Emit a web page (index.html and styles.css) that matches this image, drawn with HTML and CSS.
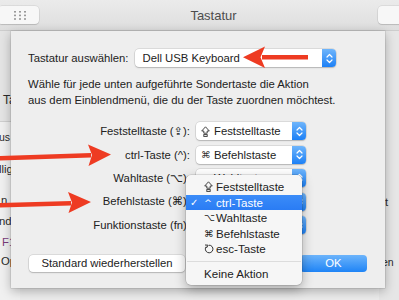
FILE: index.html
```html
<!DOCTYPE html>
<html lang="de">
<head>
<meta charset="utf-8">
<title>Tastatur</title>
<link rel="stylesheet" href="styles.css">
</head>
<body>
<div class="window">
  <header class="titlebar">
    <div class="tb-btn tb-left">
      <svg class="grid" width="12" height="9" viewBox="0 0 12 9">
        <g fill="#9a9a9a">
          <rect x="0" y="0" width="2" height="1.6"/><rect x="5" y="0" width="2" height="1.6"/><rect x="10" y="0" width="2" height="1.6"/>
          <rect x="0" y="3.6" width="2" height="1.6"/><rect x="5" y="3.6" width="2" height="1.6"/><rect x="10" y="3.6" width="2" height="1.6"/>
          <rect x="0" y="7.2" width="2" height="1.6"/><rect x="5" y="7.2" width="2" height="1.6"/><rect x="10" y="7.2" width="2" height="1.6"/>
        </g>
      </svg>
    </div>
    <div class="title">Tastatur</div>
    <div class="tb-btn tb-right"></div>
  </header>

  <main class="content">
    <div class="bg-left">
      <div class="bg-top"><span class="frag f-ta">Ta</span></div>
      <div class="bg-list">
        <span class="frag f-us">us</span>
        <span class="frag f-llig">llig</span>
        <span class="frag f-n">n</span>
        <span class="frag f-nd">nd</span>
        <span class="frag f-f1">F1</span>
        <span class="frag f-op">Op</span>
      </div>
    </div>
    <div class="bg-right">
      <span class="frag r-t">t</span>
      <span class="frag r-en">en</span>
    </div>
  </main>

  <section class="sheet">
    <div class="row-select">
      <span class="lbl">Tastatur auswählen:</span>
      <div class="popup popup-wide">
        <span class="val val-wide">Dell USB Keyboard</span>
        <span class="stepper"><svg width="7" height="11" viewBox="0 0 7 11"><path d="M1 4 L3.5 1.5 L6 4 M1 7 L3.5 9.5 L6 7" fill="none" stroke="#fff" stroke-width="1.2" stroke-linecap="round" stroke-linejoin="round"/></svg></span>
      </div>
    </div>

    <p class="desc">Wähle für jede unten aufgeführte Sondertaste die Aktion<br>aus dem Einblendmenü, die du der Taste zuordnen möchtest.</p>

    <div class="keys">
      <span class="klbl">Feststelltaste (⇪):</span>
      <div class="popup">
        <span class="val"><svg class="ico-caps" width="9" height="11" viewBox="0 0 9 11"><path d="M4.5 0.8 L8.3 5 L6.2 5 L6.2 7.2 L2.8 7.2 L2.8 5 L0.7 5 Z" fill="none" stroke="#333" stroke-width="0.9" stroke-linejoin="round"/><rect x="2.8" y="8.6" width="3.4" height="1.8" fill="none" stroke="#333" stroke-width="0.9"/></svg>Feststelltaste</span>
        <span class="stepper"><svg width="7" height="11" viewBox="0 0 7 11"><path d="M1 4 L3.5 1.5 L6 4 M1 7 L3.5 9.5 L6 7" fill="none" stroke="#fff" stroke-width="1.2" stroke-linecap="round" stroke-linejoin="round"/></svg></span>
      </div>

      <span class="klbl">ctrl-Taste (^):</span>
      <div class="popup">
        <span class="val"><span class="sym">⌘</span>Befehlstaste</span>
        <span class="stepper"><svg width="7" height="11" viewBox="0 0 7 11"><path d="M1 4 L3.5 1.5 L6 4 M1 7 L3.5 9.5 L6 7" fill="none" stroke="#fff" stroke-width="1.2" stroke-linecap="round" stroke-linejoin="round"/></svg></span>
      </div>

      <span class="klbl">Wahltaste (⌥):</span>
      <div class="popup">
        <span class="val"><span class="sym">⌥</span>Wahltaste</span>
        <span class="stepper"><svg width="7" height="11" viewBox="0 0 7 11"><path d="M1 4 L3.5 1.5 L6 4 M1 7 L3.5 9.5 L6 7" fill="none" stroke="#fff" stroke-width="1.2" stroke-linecap="round" stroke-linejoin="round"/></svg></span>
      </div>

      <span class="klbl">Befehlstaste (⌘):</span>
      <div class="popup">
        <span class="val"></span>
        <span class="stepper"><svg width="7" height="11" viewBox="0 0 7 11"><path d="M1 4 L3.5 1.5 L6 4 M1 7 L3.5 9.5 L6 7" fill="none" stroke="#fff" stroke-width="1.2" stroke-linecap="round" stroke-linejoin="round"/></svg></span>
      </div>

      <span class="klbl">Funktionstaste (fn):</span>
      <div class="popup">
        <span class="val"></span>
        <span class="stepper"><svg width="7" height="11" viewBox="0 0 7 11"><path d="M1 4 L3.5 1.5 L6 4 M1 7 L3.5 9.5 L6 7" fill="none" stroke="#fff" stroke-width="1.2" stroke-linecap="round" stroke-linejoin="round"/></svg></span>
      </div>
    </div>

    <div class="actions">
      <button class="btn btn-std">Standard wiederherstellen</button>
      <span class="spacer"></span>
      <button class="btn btn-ok">OK</button>
    </div>

    <div class="menu">
      <div class="mi"><span class="chk"></span><span class="mico"><svg width="9" height="11" viewBox="0 0 9 11"><path d="M4.5 0.8 L8.3 5 L6.2 5 L6.2 7.2 L2.8 7.2 L2.8 5 L0.7 5 Z" fill="none" stroke="#333" stroke-width="0.9" stroke-linejoin="round"/><rect x="2.8" y="8.6" width="3.4" height="1.8" fill="none" stroke="#333" stroke-width="0.9"/></svg></span><span>Feststelltaste</span></div>
      <div class="mi mi-sel"><span class="chk">✓</span><span class="mico">^</span><span>ctrl-Taste</span></div>
      <div class="mi"><span class="chk"></span><span class="mico">⌥</span><span>Wahltaste</span></div>
      <div class="mi"><span class="chk"></span><span class="mico">⌘</span><span>Befehlstaste</span></div>
      <div class="mi"><span class="chk"></span><span class="mico"><svg width="10" height="10" viewBox="0 0 10 10"><path d="M2.2 2.6 A3.8 3.8 0 1 0 5 1.2" fill="none" stroke="#333" stroke-width="1"/><path d="M1 1 L4.2 1.2 L2.4 4" fill="none" stroke="#333" stroke-width="1" stroke-linejoin="round"/></svg></span><span>esc-Taste</span></div>
      <div class="msep"></div>
      <div class="mi"><span class="chk"></span><span class="mtext">Keine Aktion</span></div>
    </div>
  </section>

  <svg class="arrows" width="399" height="300" viewBox="0 0 399 300">
    <g fill="#ee3b22" stroke="none">
      <path d="M308 55 L262 55 L262 59.5 L308 59.5 Z"/>
      <path d="M243 57.2 L265 46.5 L260.5 57.2 L265 68 Z"/>
      <path d="M0 156 L91 153 L91 157.5 L0 160.5 Z"/>
      <path d="M111 154.5 L88 144.5 L92 155 L88.5 166 Z"/>
      <path d="M0 203 L71 201 L71 205.5 L0 207.5 Z"/>
      <path d="M91 202 L68 192 L72 202.5 L68.5 213 Z"/>
    </g>
  </svg>
</div>
</body>
</html>
```

FILE: styles.css
```css
* { box-sizing: border-box; }

html, body {
  margin: 0;
  padding: 0;
}

body {
  width: 399px;
  height: 300px;
  overflow: hidden;
  background: #e9e9e9;
  font-family: "Liberation Sans", Arial, "DejaVu Sans", sans-serif;
  font-size: 11.3px;
  color: #222;
}

.window {
  position: relative;
  width: 399px;
  height: 300px;
  display: flex;
  flex-direction: column;
}

/* ---------- title bar ---------- */
.titlebar {
  height: 31px;
  flex: none;
  display: flex;
  align-items: center;
  background: linear-gradient(#ebebeb, #dedede);
  border-bottom: 1px solid #cdcdcd;
}

.tb-btn {
  height: 18px;
  background: #f7f7f7;
  border-radius: 4px;
  box-shadow: 0 0 0 0.5px rgba(0,0,0,0.12), 0 1px 1px rgba(0,0,0,0.12);
  display: flex;
  align-items: center;
  justify-content: center;
}

.tb-left {
  width: 41px;
  margin-left: -2px;
}

.tb-left .grid { margin-left: 2px; }

.title {
  flex: 1;
  text-align: center;
  font-size: 13px;
  color: #4d4d4d;
  padding-left: 10px;
}

.tb-right {
  width: 28px;
  margin-right: -7px;
}

/* ---------- background pane ---------- */
.content {
  flex: 1;
  display: flex;
  justify-content: space-between;
  background: #ececec;
}

.frag {
  display: block;
  line-height: 16px;
  white-space: nowrap;
  color: #2a2a2a;
}

.bg-left {
  width: 20px;
  display: flex;
  flex-direction: column;
}

.bg-top {
  height: 91px;
  border-bottom: 1px solid #cfcfcf;
  border-right: 1px solid #dcdcdc;
  background: #e4e4e4;
  display: flex;
  align-items: flex-end;
  padding-bottom: 13px;
}

.f-ta { margin-left: 3px; font-size: 12px; }

.bg-list {
  display: flex;
  flex-direction: column;
  background: #f0f0f0;
  flex: 1;
}

.f-us { margin-top: 7px; margin-left: -1px; font-size: 10.5px; }
.f-llig { margin-top: 16px; margin-left: -1px; }
.f-n { margin-top: 15px; margin-left: 1px; }
.f-nd { margin-top: 5px; margin-left: -1px; }
.f-f1 { margin-top: 5px; margin-left: 2px; color: #7a3b7a; }
.f-op { margin-top: 3px; margin-left: 1px; }

.bg-right {
  width: 20px;
  display: flex;
  flex-direction: column;
  background: #e6e6e6;
}

.r-t { margin-top: 163px; margin-left: 6px; }
.r-en { margin-top: 44px; margin-left: 3px; font-size: 10.5px; }

/* ---------- sheet ---------- */
.sheet {
  position: absolute;
  left: 11px;
  top: 31px;
  width: 374px;
  height: 257px;
  background: #eeeeee;
  box-shadow: 0 3px 10px rgba(0,0,0,0.28), 0 0 0 0.5px rgba(0,0,0,0.15);
  padding: 18px 17px 0 17px;
  display: flex;
  flex-direction: column;
}

.row-select {
  display: flex;
  align-items: center;
  height: 18px;
  gap: 7px;
}

.lbl { white-space: nowrap; }

.popup {
  display: flex;
  align-items: center;
  height: 18px;
  background: #fff;
  border-radius: 4px;
  box-shadow: 0 0 0 0.5px rgba(0,0,0,0.16), 0 1px 1.5px rgba(0,0,0,0.18);
}

.popup-wide { width: 201px; }

.val {
  flex: 1;
  display: flex;
  align-items: center;
  gap: 4px;
  padding-left: 5px;
  white-space: nowrap;
  overflow: hidden;
}

.val-wide { padding-left: 7px; }

.sym {
  width: 9px;
  font-family: "DejaVu Sans", sans-serif;
  font-size: 9.5px;
  color: #333;
  text-align: center;
}

.ico-caps { flex: none; }

.stepper {
  flex: none;
  width: 14px;
  height: 18px;
  border-radius: 0 4px 4px 0;
  background: linear-gradient(#6fb5fb, #1c80f6);
  display: flex;
  align-items: center;
  justify-content: center;
}

.desc {
  margin: 9px 0 0 0;
  line-height: 16px;
  white-space: nowrap;
}

.keys {
  margin-top: 14px;
  display: grid;
  grid-template-columns: 162px 110px;
  grid-auto-rows: 18px;
  row-gap: 5.5px;
  column-gap: 6px;
  align-items: center;
}

.klbl {
  text-align: right;
  white-space: nowrap;
}

.actions {
  margin-top: 21px;
  display: flex;
  align-items: center;
  padding-left: 1px;
}

.spacer { flex: 1; }

.btn {
  font: inherit;
  height: 17px;
  border: none;
  border-radius: 4px;
  padding: 0;
  line-height: 17px;
}

.btn-std {
  width: 156px;
  background: #fff;
  color: #222;
  box-shadow: 0 0 0 0.5px rgba(0,0,0,0.16), 0 1px 1.5px rgba(0,0,0,0.18);
}

.btn-ok {
  width: 67px;
  margin-right: 1px;
  background: linear-gradient(#6cb4fb, #1f84f6);
  color: #fff;
}

/* ---------- dropdown menu ---------- */
.menu {
  position: absolute;
  left: 175px;
  top: 144px;
  width: 116px;
  height: 110px;
  padding: 4px 0;
  background: #f6f6f6;
  border-radius: 5px;
  box-shadow: 0 4px 12px rgba(0,0,0,0.3), 0 0 0 0.5px rgba(0,0,0,0.18);
  display: flex;
  flex-direction: column;
  font-size: 11.6px;
}

.mi {
  height: 15.5px;
  display: grid;
  grid-template-columns: 18px 12px 1fr;
  align-items: center;
  white-space: nowrap;
}

.mi-sel {
  background: linear-gradient(#3b8cf8, #2a7cf4);
  color: #fff;
}

.chk {
  padding-left: 4px;
  font-family: "DejaVu Sans", sans-serif;
  font-size: 10px;
  font-weight: bold;
}

.mico {
  font-family: "DejaVu Sans", sans-serif;
  font-size: 9.5px;
  display: flex;
  align-items: center;
}

.mtext { grid-column: 2 / 4; }

.msep {
  height: 9px;
  margin: 0 1px;
  display: flex;
  align-items: center;
}

.msep::before {
  content: "";
  display: block;
  width: 100%;
  height: 1px;
  background: #dcdcdc;
}

/* ---------- annotation arrows ---------- */
.arrows {
  position: absolute;
  left: 0;
  top: 0;
  pointer-events: none;
}
```
